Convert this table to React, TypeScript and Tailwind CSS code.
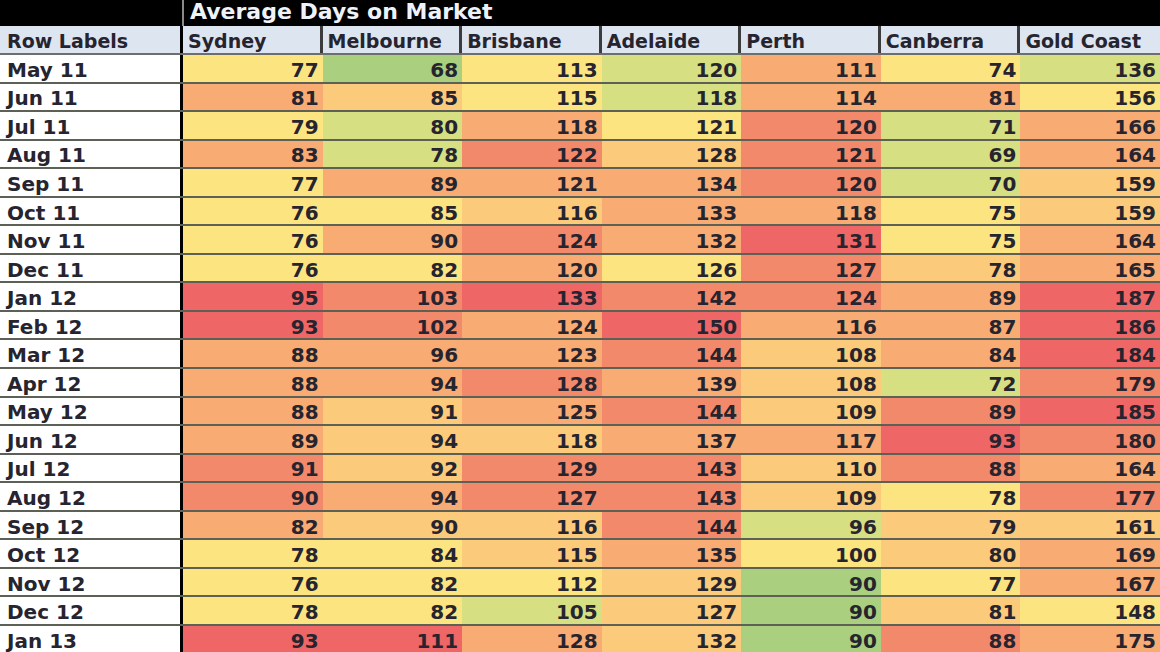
import React from "react";

const levels: any = {
  G: "bg-[#a9cf7f]",
  LG: "bg-[#d6df82]",
  Y: "bg-[#fce581]",
  LO: "bg-[#fbcb7b]",
  O: "bg-[#f8ac73]",
  RO: "bg-[#f3896b]",
  R: "bg-[#ee6766]",
};

const cities = ["Sydney", "Melbourne", "Brisbane", "Adelaide", "Perth", "Canberra", "Gold Coast"];

const rows: [string, string][] = [
  ["May 11", "77 Y|68 G|113 Y|120 LG|111 O|74 Y|136 LG"],
  ["Jun 11", "81 O|85 LO|115 Y|118 LG|114 O|81 O|156 Y"],
  ["Jul 11", "79 Y|80 LG|118 O|121 Y|120 RO|71 LG|166 O"],
  ["Aug 11", "83 O|78 LG|122 RO|128 LO|121 RO|69 LG|164 O"],
  ["Sep 11", "77 Y|89 O|121 O|134 O|120 RO|70 LG|159 LO"],
  ["Oct 11", "76 Y|85 Y|116 LO|133 O|118 O|75 Y|159 LO"],
  ["Nov 11", "76 Y|90 O|124 RO|132 O|131 R|75 Y|164 O"],
  ["Dec 11", "76 Y|82 Y|120 O|126 Y|127 RO|78 LO|165 O"],
  ["Jan 12", "95 R|103 RO|133 R|142 RO|124 RO|89 O|187 R"],
  ["Feb 12", "93 R|102 RO|124 O|150 R|116 O|87 O|186 R"],
  ["Mar 12", "88 O|96 O|123 O|144 RO|108 LO|84 O|184 R"],
  ["Apr 12", "88 O|94 O|128 RO|139 O|108 LO|72 LG|179 RO"],
  ["May 12", "88 O|91 LO|125 O|144 RO|109 LO|89 RO|185 R"],
  ["Jun 12", "89 O|94 LO|118 LO|137 O|117 O|93 R|180 RO"],
  ["Jul 12", "91 RO|92 LO|129 RO|143 RO|110 LO|88 RO|164 O"],
  ["Aug 12", "90 RO|94 O|127 RO|143 RO|109 LO|78 Y|177 RO"],
  ["Sep 12", "82 O|90 LO|116 LO|144 RO|96 LG|79 LO|161 LO"],
  ["Oct 12", "78 Y|84 Y|115 LO|135 O|100 Y|80 LO|169 O"],
  ["Nov 12", "76 Y|82 Y|112 Y|129 LO|90 G|77 Y|167 O"],
  ["Dec 12", "78 Y|82 Y|105 LG|127 LO|90 G|81 LO|148 Y"],
  ["Jan 13", "93 R|111 R|128 O|132 LO|90 G|88 RO|175 O"],
];

export default function App() {
  return (
    <div className="w-[1160px] h-[652px] overflow-hidden bg-white font-['DejaVu_Sans',sans-serif] font-bold text-[#26242f]">
      {/* title bar */}
      <div className="flex h-[26px] bg-black">
        <div className="w-[182px]" />
        <div className="border-l-2 border-[#8a8a8a] pl-[6px] text-[22px] leading-[24px] text-[#eef2fa]">
          Average Days on Market
        </div>
      </div>

      {/* header */}
      <div className="grid grid-cols-[183px_repeat(7,minmax(0,1fr))] h-[29px] bg-[#dce5f0] border-b-2 border-[#6e6e6e] text-[19px] leading-none">
        <div className="flex items-center pt-[3px] pl-[7px] border-r-[3px] border-black">Row Labels</div>
        {cities.map((c, i) => (
          <div
            key={c}
            className={`flex items-center pt-[3px] pl-[5px] whitespace-nowrap ${i < 6 ? "border-r-[3px] border-[#3c3c3c]" : ""}`}
          >
            {c}
          </div>
        ))}
      </div>

      {/* body */}
      {rows.map(([label, data]) => (
        <div
          key={label}
          className="grid grid-cols-[183px_repeat(7,minmax(0,1fr))] h-[28.55px] border-b-2 border-[#5d6055] text-[20px] leading-none"
        >
          <div className="flex items-center pt-[3px] pl-[7px] bg-white border-r-[3px] border-black">{label}</div>
          {data.split("|").map((cell, i) => {
            const [v, lv] = cell.split(" ");
            return (
              <div key={i} className={`${levels[lv]} flex items-center justify-end pt-[3px] pr-[4px]`}>
                {v}
              </div>
            );
          })}
        </div>
      ))}
    </div>
  );
}
